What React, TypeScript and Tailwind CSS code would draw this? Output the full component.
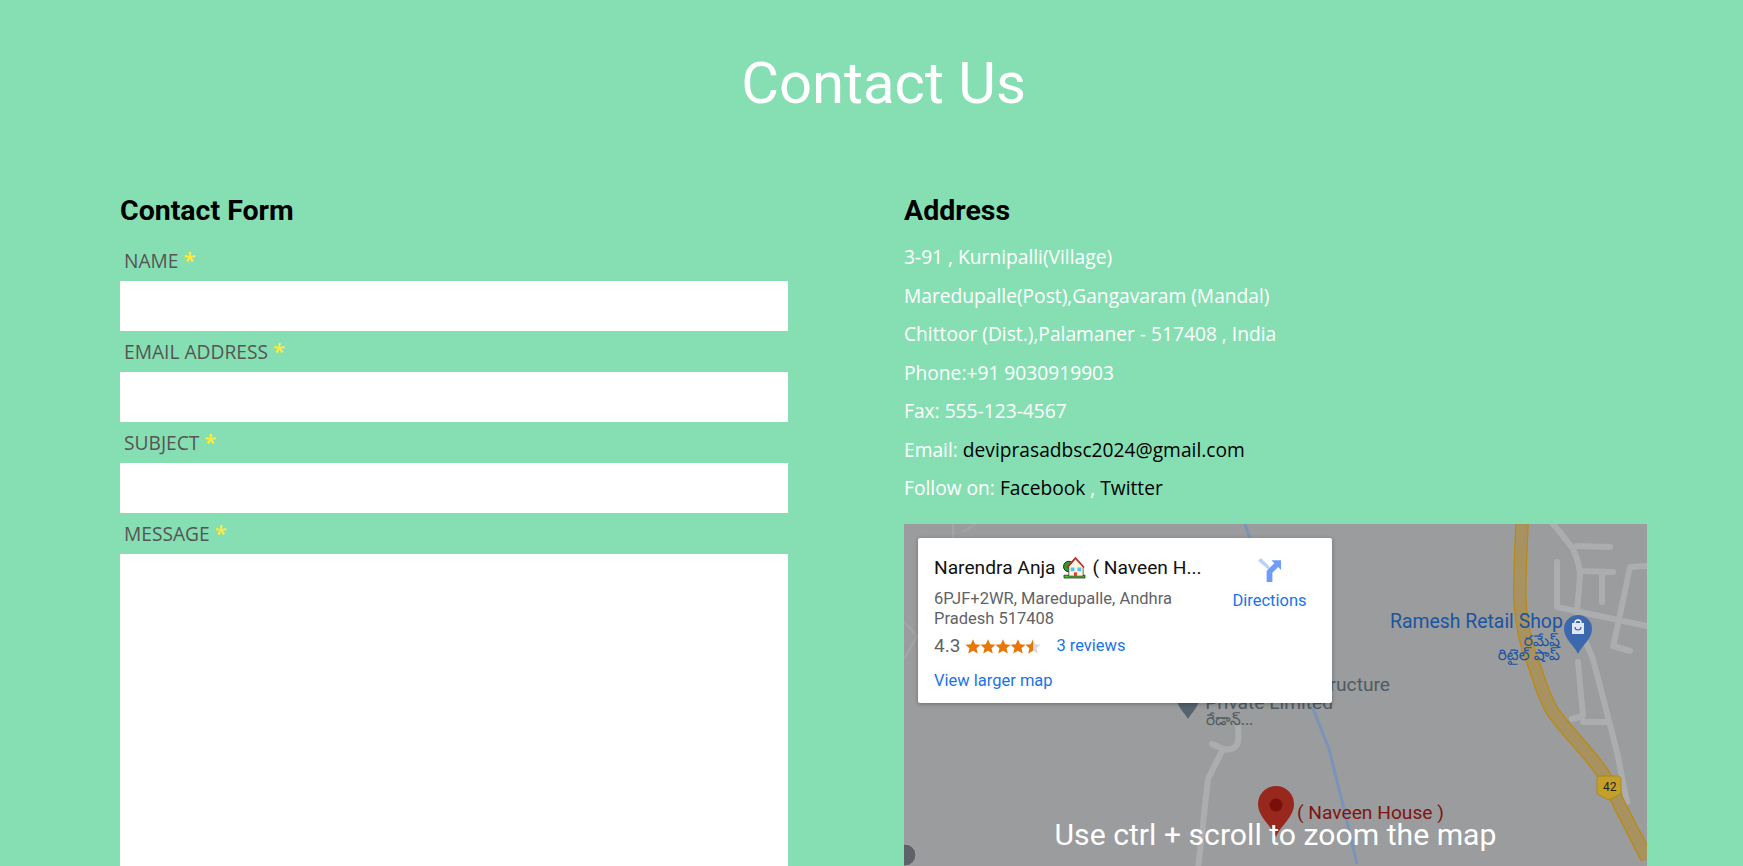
const Field = ({ label, tall }: { label: string; tall?: boolean }) => (
  <div>
    <label className="block h-[41px] pl-[4px] pt-[7px] text-[19.2px] leading-[27px] text-[#555555]">
      {label} <span className="text-[22px] font-semibold leading-none text-[#ffe93b]">*</span>
    </label>
    {tall ? (
      <textarea className="block h-[400px] w-full resize-none bg-white outline-none" />
    ) : (
      <input className="block h-[50px] w-full bg-white outline-none" />
    )}
  </div>
);

const Star = ({ x, half }: { x: number; half?: boolean }) => (
  <g transform={`translate(${x} 0)`}>
    <path d="M8 .3l2.200 5 5.400.5-4.100 3.500 1.300 5.300L8 11.800l-4.800 2.800 1.300-5.300L.4 5.800l5.400-.5z" fill={half ? "#dadada" : "#e8770a"} />
    {half && <path d="M8 .3v11.500l-4.800 2.800 1.300-5.300L.4 5.800l5.400-.5z" fill="#e8770a" />}
  </g>
);

const highway = "M618 0C617 30 615 55 616 78C618 105 622 122 629 138C636 158 640 174 649 188C665 210 682 226 696 245C704 256 710 270 716 282C726 302 735 318 743 335";

const MapRoads = () => (
  <svg className="absolute inset-0 h-full w-full" viewBox="0 0 743 622" fill="none">
    <g stroke="#acadae" strokeWidth="6" strokeLinecap="round" strokeLinejoin="round">
      <path d="M649 0c8 9 14 17 20 25 4 9 7 18 7 27l-3 36c2 18 10 32 16 47l24 93 10 50" />
      <path d="M673 22l33 1M676 47l33 1M698 48v30" />
      <path d="M653 38v45l90 19" />
      <path d="M743 42l-17 1-13 62-4 17 17 5" />
      <path d="M674 138l5 54-11 3M679 198h24" />
      <path d="M334 203c1 10 1 17-3 20-4 3-8 3-12 2l-11-5M319 225l-15 30-10 90" />
    </g>
    <g stroke="#a4a5a6" strokeWidth="2">
      <path d="M49 0v15M58 8l14-8M0 98l13 14-13 23" />
    </g>
    <path d="M341 0l5 15M408 182l17 43 15 60 13 55" stroke="#7a94b8" strokeWidth="3" />
    <path d={highway} stroke="#b98a12" strokeWidth="13.500" />
    <path d={highway} stroke="#a89360" strokeWidth="11" />
    <path d="M695 252h20l2 2v16l-12 6-12-6v-16z" fill="#c4a02a" stroke="#a88a20" />
    <path d="M284 195c-3-6-11-12-11-20a11 11 0 0 1 22 0c0 8-8 14-11 20z" fill="#55636e" />
    <g transform="translate(0 8)">
      <path d="M674 122c-4-9-14-15-14-25a14 14 0 0 1 28 0c0 10-10 16-14 25z" fill="#3c68ae" />
      <path d="M668 91h12v11h-12z" fill="#ffffff" fillOpacity=".85" />
      <path d="M671 91a3 3 0 0 1 6 0" stroke="#ffffff" strokeWidth="1.4" />
      <path d="M671 95a3 3 0 0 0 6 0" stroke="#3c68ae" strokeWidth="1.2" />
    </g>
    <path d="M372 313c-5-12-18-20-18-33a18 18 0 0 1 36 0c0 13-13 21-18 33z" fill="#98271d" />
    <circle cx="372" cy="281" r="6.500" fill="#7a0f0a" />
    <circle cx="1" cy="331" r="11" fill="#5f6368" stroke="#a8a9aa" />
  </svg>
);

const InfoCard = () => (
  <div className="absolute left-[14px] top-[14px] flex h-[165px] w-[414px] rounded-[2px] bg-white pl-[16px] pt-[18px] font-['Roboto',sans-serif] shadow-[0_1px_4px_rgba(0,0,0,0.3)]">
    <div className="w-[283px]">
      <div className="flex items-center text-[19.2px] leading-[24px] text-[#111111]">
        Narendra Anja
        <svg className="mx-[7px] h-[23px] w-[23px]" viewBox="0 0 24 24">
          <circle cx="6" cy="11" r="5.500" fill="#2e9e2e" stroke="#000" strokeWidth=".8" />
          <path d="M1 20h22v3H1z" fill="#34c924" stroke="#000" strokeWidth=".6" />
          <path d="M6 11l7-8 8 8v10H6z" fill="#fff6e0" stroke="#000" strokeWidth=".6" />
          <path d="M4 12L13 2l9 10" fill="none" stroke="#c62828" strokeWidth="1.6" />
          <path d="M8 12h4v4H8zM15 12h4v4h-4z" fill="#4fc3f7" />
          <path d="M11.500 17h3v4h-3z" fill="#e53935" />
        </svg>
        ( Naveen H...
      </div>
      <div className="mt-[9px] text-[16.5px] leading-[20px] text-[#5f6368]">
        6PJF+2WR, Maredupalle, Andhra Pradesh 517408
      </div>
      <div className="mt-[5px] flex h-[26px] items-center">
        <span className="text-[19px] text-[#5f6368]">4.3</span>
        <svg className="ml-[5px] h-[15px] w-[76px]" viewBox="0 0 76 15">
          <Star x={0} />
          <Star x={15} />
          <Star x={30} />
          <Star x={45} />
          <Star x={60} half />
        </svg>
        <span className="ml-[15px] text-[16.5px] text-[#1a73e8]">3 reviews</span>
      </div>
      <div className="mt-[11px] text-[16.5px] leading-[20px] text-[#1a73e8]">View larger map</div>
    </div>
    <div className="flex w-[105px] flex-col items-center">
      <svg className="mt-[1px] h-[25px] w-[25px]" viewBox="0 0 26 26">
        <path d="M1 4l3-3 9 9v4z" fill="#bcd0fb" />
        <path d="M10 26V14.500l8-8-3-3h10v10l-3-3-6 6V26z" fill="#6f9cf8" />
      </svg>
      <div className="mt-[9px] text-[16.5px] leading-[20px] text-[#1a73e8]">Directions</div>
    </div>
  </div>
);

const MapBox = () => (
  <div className="relative mt-[16px] h-[622px] overflow-hidden bg-[#9b9c9d] font-['Roboto',sans-serif]">
    <MapRoads />
    <span className="absolute left-[326px] top-[150px] w-[160px] text-right text-[19.2px] leading-[22px] text-[#4f5b63]">
      ructure
    </span>
    <span className="absolute left-[269px] top-[169px] w-[160px] text-right text-[19.2px] leading-[20px] text-[#4f5b63]">
      Private Limited
    </span>
    <span className="absolute left-[302px] top-[190px] font-['Noto_Sans_Telugu','Noto_Sans',sans-serif] text-[15.3px] leading-[16px] text-[#4f5b63]">
      రేడాన్...
    </span>
    <span className="absolute left-[486px] top-[87px] text-[19.4px] leading-[22px] text-[#1c54a0]">
      Ramesh Retail Shop
    </span>
    <span className="absolute left-[556px] top-[111px] w-[100px] text-right font-['Noto_Sans_Telugu','Noto_Sans',sans-serif] text-[15.3px] leading-[16px] text-[#1c54a0]">
      రమేష్
    </span>
    <span className="absolute left-[556px] top-[125px] w-[100px] text-right font-['Noto_Sans_Telugu','Noto_Sans',sans-serif] text-[15.3px] leading-[16px] text-[#1c54a0]">
      రిటైల్ షాప్
    </span>
    <span className="absolute left-[699px] top-[255px] w-[12px] text-center text-[12px] leading-[16px] text-[#222222]">
      42
    </span>
    <span className="absolute left-[393px] top-[277px] text-[19.2px] leading-[24px] text-[#7f1410]">
      ( Naveen House )
    </span>
    <InfoCard />
    <div className="absolute inset-0 flex items-center justify-center text-[30.2px] text-white">
      Use ctrl + scroll to zoom the map
    </div>
  </div>
);

const addressLines = [
  "3-91 , Kurnipalli(Village)",
  "Maredupalle(Post),Gangavaram (Mandal)",
  "Chittoor (Dist.),Palamaner - 517408 , India",
  "Phone:+91 9030919903",
  "Fax: 555-123-4567",
];

export default function App() {
  return (
    <div className="h-[866px] overflow-hidden bg-[#86dfb3] pl-[120px] pr-[96px] font-['Open_Sans',sans-serif]">
      <h1 className="pt-[43px] text-center font-['Roboto',sans-serif] text-[58px] leading-[80px] text-white">
        Contact Us
      </h1>
      <div className="mt-[70px] grid grid-cols-[668px_743px] gap-x-[116px]">
        <div>
          <h2 className="font-['Roboto',sans-serif] text-[28.500px] font-bold leading-[36px] text-black">Contact Form</h2>
          <div className="mt-[11px]">
            <Field label="NAME" />
            <Field label="EMAIL ADDRESS" />
            <Field label="SUBJECT" />
            <Field label="MESSAGE" tall />
          </div>
        </div>
        <div>
          <h2 className="font-['Roboto',sans-serif] text-[28.500px] font-bold leading-[36px] text-black">Address</h2>
          <div className="mt-[9px] text-[19.2px] leading-[38.500px] text-white">
            {addressLines.map((line) => (
              <p key={line}>{line}</p>
            ))}
            <p>
              Email: <span className="text-black">deviprasadbsc2024@gmail.com</span>
            </p>
            <p>
              Follow on: <span className="text-black">Facebook</span> , <span className="text-black">Twitter</span>
            </p>
          </div>
          <MapBox />
        </div>
      </div>
    </div>
  );
}
